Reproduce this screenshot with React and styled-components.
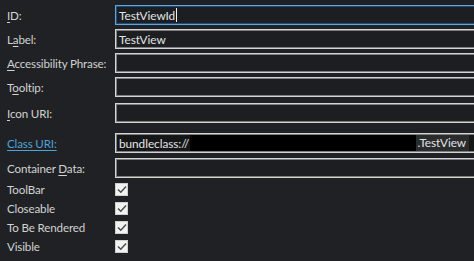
import React from "react";
import styled, { createGlobalStyle } from "styled-components";

const Global = createGlobalStyle`
  html, body { margin: 0; padding: 0; background: #1f2124; overflow: hidden; }
  body { font-family: "Segoe UI", Lato, "Open Sans", sans-serif; }
`;

const Panel = styled.div`
  display: flex;
  flex-direction: column;
  width: 474px;
  height: 261px;
  padding-top: 5px;
  box-sizing: border-box;
  overflow: hidden;
  background: #1f2124;
`;

const Row = styled.div`
  display: grid;
  grid-template-columns: 115px 370px;
  align-items: center;
  height: ${(p) => p.h || 20}px;
  margin-top: ${(p) => p.mt || 0}px;
`;

const Label = styled.div`
  padding-left: 7px;
  font-size: 11.6px;
  letter-spacing: -0.15px;
  color: #d2d2d2;
  white-space: nowrap;
  u { text-decoration-thickness: 1px; text-underline-offset: 2px; }
`;

const Link = styled(Label)`
  color: #4ea3d8;
  text-decoration: underline;
  text-underline-offset: 2px;
`;

const Field = styled.div`
  display: flex;
  align-items: center;
  height: 20px;
  box-sizing: border-box;
  padding-left: 3px;
  border: 1px solid ${(p) => (p.focused ? "#5fa6e0" : "#d4d4d4")};
  box-shadow: inset 0 0 0 1px ${(p) => (p.focused ? "#1d4f7a" : "#7d7d7d")};
  background: ${(p) => (p.dark ? "#151618" : "#1c1e21")};
  font-size: 11.8px;
  letter-spacing: -0.05px;
  color: #e4e4e4;
  white-space: nowrap;
`;

const Caret = styled.span`
  display: inline-block;
  width: 1px;
  height: 14px;
  margin-left: 1px;
  background: #f0f0f0;
`;

const Redact = styled.span`
  flex: 1;
  height: 16px;
  background: #000;
  margin-left: 1px;
`;

const Tail = styled.span`
  background: #2a2b2d;
  padding: 0 3px 0 1px;
  margin-right: 15px;
  line-height: 16px;
`;

const Box = styled.div`
  width: 11px;
  height: 11px;
  background: #f2f2f2;
  border: 1px solid #cfcfcf;
  display: flex;
  align-items: center;
  justify-content: center;
`;

const Check = () => (
  <svg width="10" height="9" viewBox="0 0 10 9">
    <path d="M1 4.5 L3.8 7.2 L9 1.5" fill="none" stroke="#4a4a4a" strokeWidth="1.4" />
  </svg>
);

const fields = [
  { label: <><u>I</u>D:</>, value: "TestViewId", focused: true },
  { label: <>L<u>a</u>bel:</>, value: "TestView", mt: 4 },
  { label: <><u>A</u>ccessibility Phrase:</>, mt: 4 },
  { label: <>T<u>o</u>oltip:</>, mt: 4 },
  { label: <><u>I</u>con URI:</>, mt: 6 },
];

const checks = ["ToolBar", "Closeable", "To Be Rendered", "Visible"];

export default function App() {
  return (
    <Panel>
      <Global />
      {fields.map((f, i) => (
        <Row key={i} mt={f.mt}>
          <Label>{f.label}</Label>
          <Field focused={f.focused}>
            {f.value}
            {f.focused && <Caret />}
          </Field>
        </Row>
      ))}
      <Row mt={10}>
        <Link>Class URI:</Link>
        <Field dark>
          bundleclass://
          <Redact />
          <Tail>.TestView</Tail>
        </Field>
      </Row>
      <Row mt={5}>
        <Label>Container <u>D</u>ata:</Label>
        <Field />
      </Row>
      {checks.map((c, i) => (
        <Row key={c} h={19} mt={i === 0 ? 2 : 0}>
          <Label>{c}</Label>
          <Box><Check /></Box>
        </Row>
      ))}
    </Panel>
  );
}
